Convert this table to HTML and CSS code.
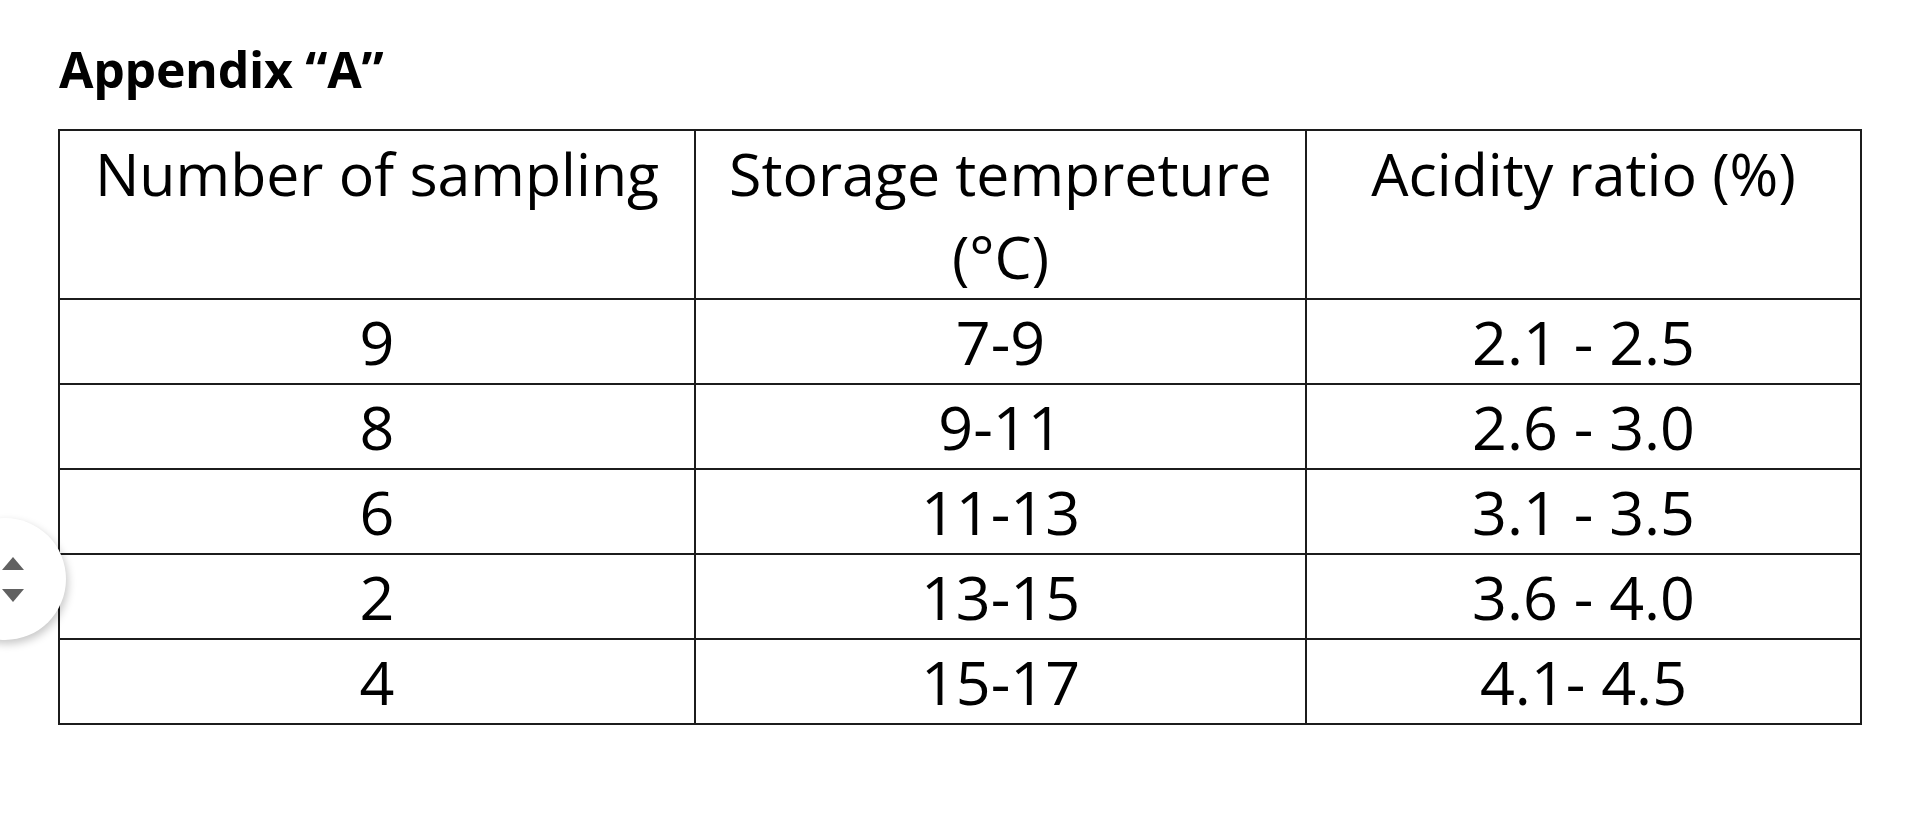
FILE: index.html
```html
<!DOCTYPE html>
<html lang="en">
<head>
<meta charset="utf-8">
<title>Appendix A</title>
<link rel="stylesheet" href="styles.css">
</head>
<body>
<main class="page">
  <h2 class="title">Appendix “A”</h2>
  <table class="data">
    <colgroup>
      <col class="c1"><col class="c2"><col class="c3">
    </colgroup>
    <thead>
      <tr class="head">
        <th>Number of sampling</th>
        <th>Storage tempreture<br>(°C)</th>
        <th>Acidity ratio (%)</th>
      </tr>
    </thead>
    <tbody>
      <tr><td>9</td><td>7-9</td><td>2.1 - 2.5</td></tr>
      <tr><td>8</td><td>9-11</td><td>2.6 - 3.0</td></tr>
      <tr><td>6</td><td>11-13</td><td>3.1 - 3.5</td></tr>
      <tr><td>2</td><td>13-15</td><td>3.6 - 4.0</td></tr>
      <tr><td>4</td><td>15-17</td><td>4.1- 4.5</td></tr>
    </tbody>
  </table>
</main>
<div class="scroller" aria-hidden="true">
  <svg class="arrows" width="26" height="48" viewBox="0 0 26 48">
    <path d="M1 14 L12 1 L23 14 Z" fill="#616161"/>
    <path d="M1 33 L23 33 L12 46 Z" fill="#616161"/>
  </svg>
</div>
</body>
</html>
```

FILE: styles.css
```css
html, body {
  margin: 0;
  padding: 0;
  background: #ffffff;
}
body {
  font-family: "Open Sans", "Lato", "Liberation Sans", sans-serif;
  color: #000;
  width: 1920px;
  height: 813px;
  overflow: hidden;
  position: relative;
}
.page {
  padding: 34px 0 0 58px;
}
.title {
  margin: 0 0 0 1px;
  font-size: 50px;
  font-weight: 700;
  line-height: 70px;
  height: 95px;
  letter-spacing: -0.3px;
}
.data {
  border-collapse: collapse;
  table-layout: fixed;
  width: 1802px;
}
.c1 { width: 636px; }
.c2 { width: 611px; }
.c3 { width: 555px; }
.data th, .data td {
  border: 2px solid #1c1c1c;
  padding: 0;
  text-align: center;
  font-weight: 400;
  font-size: 61px;
  line-height: 83px;
}
.data th {
  vertical-align: top;
  height: 166px;
  font-size: 59px;
  padding-top: 1px;
}
.data td {
  height: 83px;
  vertical-align: middle;
}
.scroller {
  position: absolute;
  left: -56px;
  top: 518px;
  width: 122px;
  height: 122px;
  border-radius: 50%;
  background: #fff;
  box-shadow: 2px 4px 9px rgba(0,0,0,0.22);
}
.arrows {
  position: absolute;
  left: 57px;
  top: 38px;
}
```
